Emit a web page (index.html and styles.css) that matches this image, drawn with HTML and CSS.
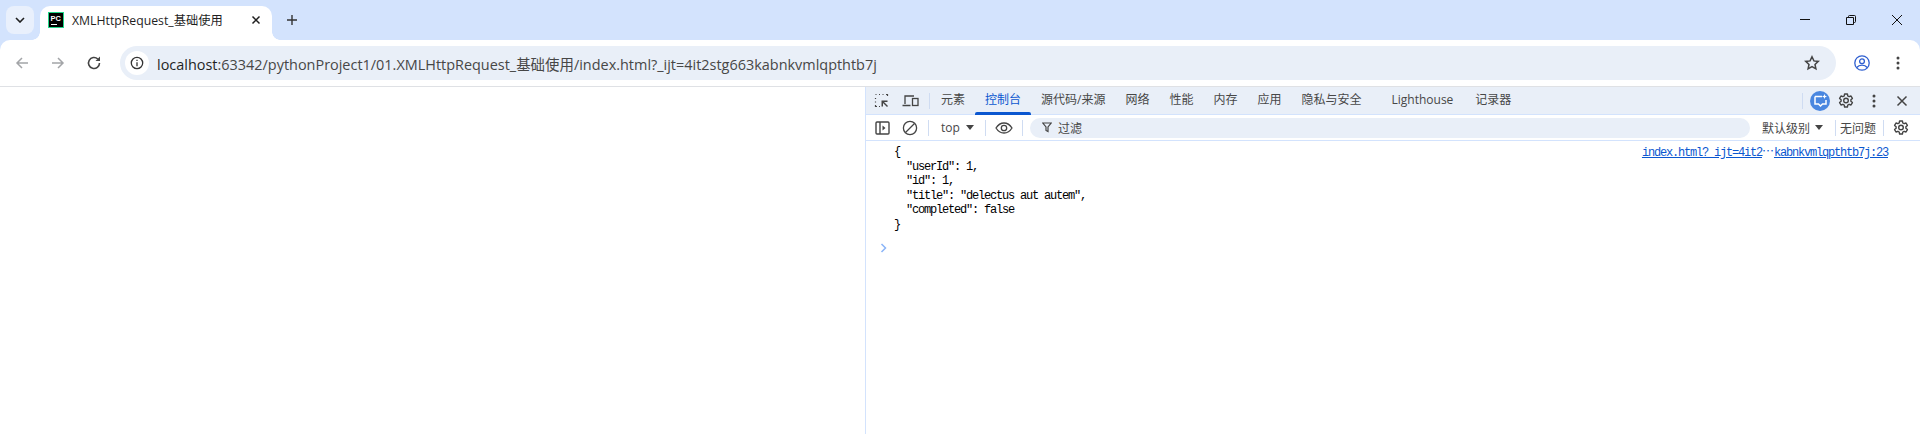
FILE: index.html
```html
<!DOCTYPE html>
<html lang="zh">
<head>
<meta charset="utf-8">
<title>XMLHttpRequest_基础使用</title>
<link rel="stylesheet" href="styles.css">
</head>
<body>
<div class="tabstrip">
  <div class="tabsearch"><svg width="10" height="6" viewBox="0 0 10 6"><path d="M1 1l4 4 4-4" fill="none" stroke="#1f1f1f" stroke-width="1.6"/></svg></div>
  <div class="tab">
    <svg class="favicon" width="16" height="16" viewBox="0 0 16 16"><rect x="0.5" y="0.5" width="15" height="15" fill="#000" stroke="#21d789"/><rect x="3" y="12" width="6" height="1" fill="#fff"/><text x="2.5" y="9" font-size="7.5" font-weight="700" font-family="Liberation Sans" fill="#fff">PC</text></svg>
    <span class="tabtitle">XMLHttpRequest_基础使用</span>
    <svg class="tabclose" width="10" height="10" viewBox="0 0 10 10"><path d="M1.500 1.500l7 7m0-7l-7 7" stroke="#1f1f1f" stroke-width="1.500"/></svg>
  </div>
  <svg class="newtab" width="12" height="12" viewBox="0 0 12 12"><path d="M6 1v10M1 6h10" stroke="#333" stroke-width="1.400"/></svg>
  <div class="winctl">
    <svg width="12" height="12" viewBox="0 0 12 12"><path d="M1 5.500h10" stroke="#111"/></svg>
    <svg width="12" height="12" viewBox="0 0 12 12"><path d="M1.500 3.500h7v7h-7zM3.500 3.500v-1a1 1 0 0 1 1-1h5a1 1 0 0 1 1 1v5a1 1 0 0 1-1 1h-1" fill="none" stroke="#111"/></svg>
    <svg width="12" height="12" viewBox="0 0 12 12"><path d="M1 1l10 10M11 1L1 11" stroke="#111"/></svg>
  </div>
</div>
<div class="toolbar">
  <svg class="navbtn" width="16" height="16" viewBox="0 0 16 16"><path d="M14 8H3M8 3L3 8l5 5" fill="none" stroke="#a3a5a8" stroke-width="1.500"/></svg>
  <svg class="navbtn" width="16" height="16" viewBox="0 0 16 16"><path d="M2 8h11M8 3l5 5-5 5" fill="none" stroke="#a3a5a8" stroke-width="1.500"/></svg>
  <svg class="navbtn" width="16" height="16" viewBox="0 0 16 16"><path d="M13.500 8A5.500 5.500 0 1 1 11.800 4" fill="none" stroke="#444" stroke-width="1.600"/><path d="M14 1.500V6H9.500z" fill="#444"/></svg>
  <div class="omnibox">
    <span class="siteinfo"><svg width="14" height="14" viewBox="0 0 14 14"><circle cx="7" cy="7" r="5.700" fill="none" stroke="#333" stroke-width="1.300"/><path d="M7 6.200V10.200M7 3.800v1.300" stroke="#333" stroke-width="1.300"/></svg></span>
    <span class="url"><span class="host">localhost</span>:63342/pythonProject1/01.XMLHttpRequest_基础使用/index.html?_ijt=4it2stg663kabnkvmlqpthtb7j</span>
    <svg class="star" width="16" height="16" viewBox="0 0 16 16"><path d="M8 1.800l1.900 4.100 4.400.5-3.300 3 .9 4.400L8 11.600l-3.900 2.200.9-4.400-3.300-3 4.400-.5z" fill="none" stroke="#444" stroke-width="1.500"/></svg>
  </div>
  <svg class="avatar" width="16" height="16" viewBox="0 0 16 16"><circle cx="8" cy="8" r="7.200" fill="none" stroke="#2f5fd0" stroke-width="1.300"/><circle cx="8" cy="6.300" r="2.400" fill="none" stroke="#2f5fd0" stroke-width="1.300"/><path d="M2.800 12.500c1.500-2 3.200-2.400 5.200-2.400s3.700.4 5.200 2.400" fill="none" stroke="#2f5fd0" stroke-width="1.300"/></svg>
  <svg class="menu" width="4" height="14" viewBox="0 0 4 14"><circle cx="2" cy="2" r="1.500" fill="#444"/><circle cx="2" cy="7" r="1.500" fill="#444"/><circle cx="2" cy="12" r="1.500" fill="#444"/></svg>
</div>
<main class="main">
  <div class="page"></div>
  <section class="devtools">
    <div class="dt-tabs">
      <svg class="ico-inspect" width="16" height="16" viewBox="0 0 16 16"><path d="M1.500 1.500h1M5 1.500h1M8.500 1.500h1M12 1.500h1.500V3M1.500 5v1M1.500 8.500v1M1.500 12v1.500H3M5 13.500h1" fill="none" stroke="#444" stroke-width="1.200"/><path d="M7.500 7.500h6v1.500h-3.500l4 4-1 1-4-4v3.500H7.500z" fill="#444"/></svg>
      <svg class="ico-device" width="17" height="14" viewBox="0 0 17 14"><path d="M3 10V2h9M.5 11.500h8" fill="none" stroke="#444" stroke-width="1.300"/><rect x="10.500" y="4.500" width="5.500" height="7" fill="none" stroke="#444" stroke-width="1.300"/></svg>
      <span class="sep"></span>
      <span class="dt-tab first">元素</span>
      <span class="dt-tab active">控制台</span>
      <span class="dt-tab">源代码/来源</span>
      <span class="dt-tab">网络</span>
      <span class="dt-tab">性能</span>
      <span class="dt-tab">内存</span>
      <span class="dt-tab">应用</span>
      <span class="dt-tab wide">隐私与安全</span>
      <span class="dt-tab lighthouse">Lighthouse</span>
      <span class="dt-tab">记录器</span>
      <span class="spacer"></span>
      <span class="sep sep-end"></span>
      <span class="ai-badge"><svg width="13" height="13" viewBox="0 0 13 13"><path d="M1 2.500h7M1 2.500v7.500h3.500l2 2 2-2H12V6" fill="none" stroke="#fff" stroke-width="1.500"/><path d="M10.500 0l.7 1.800 1.800.7-1.800.7-.7 1.800-.7-1.800L8 2.500l1.800-.7z" fill="#fff"/></svg></span>
      <svg class="dt-gear" width="16" height="16" viewBox="0 0 16 16"><use href="#gear"/></svg>
      <svg class="dt-dots" width="4" height="14" viewBox="0 0 4 14"><circle cx="2" cy="2" r="1.500" fill="#444"/><circle cx="2" cy="7" r="1.500" fill="#444"/><circle cx="2" cy="12" r="1.500" fill="#444"/></svg>
      <svg class="dt-close" width="12" height="12" viewBox="0 0 12 12"><path d="M1.500 1.500l9 9m0-9l-9 9" stroke="#444" stroke-width="1.500"/></svg>
    </div>
    <div class="dt-filter">
      <svg class="ico-panel" width="15" height="14" viewBox="0 0 15 14"><rect x="1" y="1" width="13" height="12" rx="1" fill="none" stroke="#444" stroke-width="1.400"/><path d="M5 1v12" stroke="#444" stroke-width="1.400"/><path d="M7.500 4.500L10.500 7l-3 2.500z" fill="#444"/></svg>
      <svg class="ico-ban" width="16" height="16" viewBox="0 0 16 16"><circle cx="8" cy="8" r="6.600" fill="none" stroke="#444" stroke-width="1.300"/><path d="M3.500 12.500l9-9" stroke="#444" stroke-width="1.300"/></svg>
      <span class="sep sep-ctx"></span>
      <span class="ctx">top</span>
      <svg class="caret" width="8" height="5" viewBox="0 0 8 5"><path d="M0 0h8L4 5z" fill="#444"/></svg>
      <span class="sep sep-b"></span>
      <svg class="eye" width="18" height="12" viewBox="0 0 18 12"><path d="M1 6c2-3.200 4.800-5 8-5s6 1.800 8 5c-2 3.200-4.800 5-8 5S3 9.200 1 6z" fill="none" stroke="#444" stroke-width="1.300"/><circle cx="9" cy="6" r="2.700" fill="none" stroke="#444" stroke-width="1.300"/></svg>
      <span class="sep sep-c"></span>
      <div class="filterbox">
        <svg width="10" height="11" viewBox="0 0 10 11"><path d="M.8 1h8.400L6 5v4.500L4 8.500V5z" fill="none" stroke="#444" stroke-width="1.200"/></svg>
        <span class="filtertext">过滤</span>
      </div>
      <span class="level">默认级别</span>
      <svg class="caret caret-l" width="8" height="5" viewBox="0 0 8 5"><path d="M0 0h8L4 5z" fill="#444"/></svg>
      <span class="sep sep-i"></span>
      <span class="issues">无问题</span>
      <span class="sep sep-g"></span>
      <svg class="gear-b" width="16" height="16" viewBox="0 0 16 16"><use href="#gear"/></svg>
    </div>
    <div class="console">
      <div class="msg">
        <pre class="json">{
  "userId": 1,
  "id": 1,
  "title": "delectus aut autem",
  "completed": false
}</pre>
        <a class="source">index.html?_ijt=4it2<span class="ell">…</span>kabnkvmlqpthtb7j:23</a>
      </div>
      <svg class="prompt" width="7" height="10" viewBox="0 0 7 10"><path d="M1.500 1l4 4-4 4" fill="none" stroke="#8ab4f8" stroke-width="1.500"/></svg>
    </div>
  </section>
</main>
<svg class="defs" width="0" height="0"><defs><g id="gear"><path d="M6.600 1h2.800l.4 2 1.300.7 1.900-.7 1.400 2.400-1.500 1.400v1.400l1.500 1.400-1.400 2.400-1.900-.7-1.300.7-.4 2H6.600l-.4-2-1.300-.7-1.900.7L1.600 9.600l1.500-1.400V6.800L1.600 5.400 3 3l1.900.7L6.200 3z" fill="none" stroke="#444" stroke-width="1.400" stroke-linejoin="round"/><circle cx="8" cy="7.500" r="2.300" fill="none" stroke="#444" stroke-width="1.400"/></g></defs></svg>
</body>
</html>
```
FILE: styles.css
```css
* { box-sizing: border-box; }
html, body { margin: 0; height: 100%; overflow: hidden; background: #d3e3fd; }
body { font-family: "Open Sans", "Noto Sans CJK SC", sans-serif; display: flex; flex-direction: column; height: 434px; color: #1f1f1f; }
svg { flex: none; display: block; }
.defs { position: absolute; }

.tabstrip { height: 40px; display: flex; align-items: flex-start; flex: none; }
.tabsearch { width: 28px; height: 28px; margin: 6px 0 0 6px; border-radius: 8px; background: #e9f0fc; display: flex; align-items: center; justify-content: center; }
.tab { width: 232px; height: 34px; margin: 6px 0 0 6px; padding: 0 0 6px 8px; background: #fff; border-radius: 10px 10px 0 0; display: flex; align-items: center; position: relative; }
.tab::before, .tab::after { content: ""; position: absolute; bottom: 0; width: 8px; height: 8px; }
.tab::before { left: -8px; background: radial-gradient(circle at 0 0, transparent 7.500px, #fff 8px); }
.tab::after { right: -8px; background: radial-gradient(circle at 100% 0, transparent 7.500px, #fff 8px); }
.favicon { margin-right: 8px; }
.tabtitle { font-size: 12.250px; color: #1f1f1f; flex: 1; white-space: nowrap; }
.tabclose { margin-right: 11px; }
.newtab { margin: 14px 0 0 14px; }
.winctl { margin-left: auto; display: flex; gap: 34px; padding: 14px 17px 0 0; }

.toolbar { height: 47px; background: #fff; border-radius: 10px 10px 0 0; display: flex; align-items: center; flex: none; border-bottom: 1px solid #dfe1e5; }
.navbtn { margin-left: 14px; }
.navbtn + .navbtn { margin-left: 20px; }
.omnibox { margin-left: 18px; width: 1716px; height: 34px; border-radius: 17px; background: #e9eff8; display: flex; align-items: center; padding-left: 5px; }
.siteinfo { width: 24px; height: 24px; border-radius: 50%; background: #fff; display: flex; align-items: center; justify-content: center; }
.url { font-size: 14.450px; color: #474747; margin-left: 8px; white-space: nowrap; flex: 1; }
.host { color: #1f1f1f; }
.star { margin-right: 16px; }
.avatar { margin-left: 18px; }
.menu { margin-left: 26px; }

.main { flex: 1; display: flex; min-height: 0; background: #fff; }
.page { flex: 1; background: #fff; }
.devtools { width: 1055px; border-left: 1px solid #d3e3fd; display: flex; flex-direction: column; background: #fff; }
.dt-tabs { height: 28px; background: #e9eff8; border-bottom: 1px solid #d3e3fd; display: flex; align-items: center; flex: none; }
.ico-inspect { margin-left: 8px; }
.ico-device { margin-left: 12px; }
.sep { width: 1px; height: 16px; background: #cfdcf2; margin: 0 10px; flex: none; }
.dt-tab { font-size: 12px; padding: 0 10px; height: 27px; line-height: 26px; color: #474747; white-space: nowrap; position: relative; }
.dt-tab.first { padding-left: 0; margin-left: 1px; }
.dt-tab.active { color: #0b57d0; }
.dt-tab.active::after { content: ""; position: absolute; left: 0; right: 0; bottom: -1px; height: 3px; background: #0b57d0; border-radius: 2px 2px 0 0; }
.dt-tab.wide { margin-right: 10px; }
.dt-tab.lighthouse { margin-right: 2px; }
.spacer { flex: 1; }
.sep-end { margin: 0 7px 0 0; }
.ai-badge { width: 20px; height: 20px; border-radius: 50%; background: #4a87e0; display: flex; align-items: center; justify-content: center; }
.dt-gear { margin-left: 8px; }
.dt-dots { margin-left: 18px; }
.dt-close { margin: 0 12px 0 20px; }

.dt-filter { height: 26px; display: flex; align-items: center; flex: none; background: #fff; border-bottom: 1px solid #d3e3fd; }
.ico-panel { margin-left: 9px; }
.ico-ban { margin-left: 12px; }
.sep-ctx { margin: 0 12px 0 10px; }
.ctx { font-size: 12px; color: #474747; width: 19px; }
.caret { margin-left: 6px; }
.sep-b { margin: 0 9px 0 11px; }
.sep-c { margin: 0 7px 0 9px; }
.filterbox { flex: 1; height: 20px; border-radius: 10px; background: #e9eff8; display: flex; align-items: center; padding-left: 12px; }
.filtertext { font-size: 12px; color: #474747; margin-left: 6px; }
.level { font-size: 12px; color: #474747; margin-left: 12px; }
.caret-l { margin-left: 5px; }
.sep-i { margin: 0 4px 0 12px; }
.issues { font-size: 12px; color: #474747; }
.sep-g { margin: 0 0 0 7px; }
.gear-b { margin: 0 11px 0 9px; }

.console { flex: 1; background: #fff; }
.msg { display: flex; justify-content: space-between; padding: 4px 32px 0 28px; }
.json, .source { font-family: "Liberation Mono", monospace; font-size: 12px; letter-spacing: -1.200px; line-height: 14.600px; margin: 0; color: #000; }
.source { color: #0b57d0; text-decoration: underline; }
.ell { display: inline-block; width: 12px; letter-spacing: 0; text-align: center; font-family: "Noto Sans CJK SC", sans-serif; line-height: 1; }
.prompt { margin: 10px 0 0 14px; }
```
